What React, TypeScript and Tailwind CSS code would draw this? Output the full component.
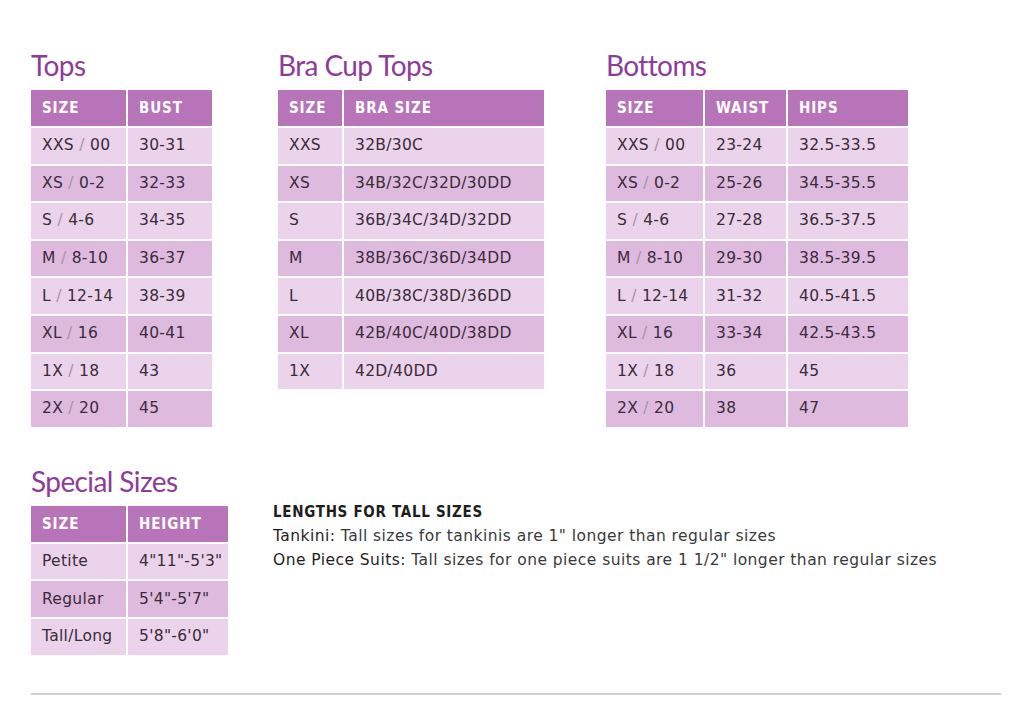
import React from "react";

const titleFont = { fontFamily: "Lato, 'Open Sans', sans-serif" };
const condFont = { fontFamily: "'DejaVu Sans Condensed', 'DejaVu Sans', sans-serif" };
const bodyFont = { fontFamily: "'DejaVu Sans', sans-serif" };

type Cell = string;

function SizeCell({ text }: { text: string }) {
  const parts = text.split(" / ");
  if (parts.length === 2) {
    return (
      <span>
        {parts[0]} <span className="text-[#a892a8]">/</span> {parts[1]}
      </span>
    );
  }
  return <span>{text}</span>;
}

function Table({
  cols,
  headers,
  rows,
}: {
  cols: string;
  headers: string[];
  rows: Cell[][];
}) {
  return (
    <div className={`grid ${cols} gap-[2px]`}>
      {headers.map((h, i) => (
        <div
          key={"h" + i}
          className="h-[36px] bg-[#b874b8] text-white font-bold text-[15px] tracking-[0.9px] flex items-center pl-[11px]"
          style={condFont}
        >
          {h}
        </div>
      ))}
      {rows.map((r, ri) =>
        r.map((c, ci) => (
          <div
            key={ri + "-" + ci}
            className={`h-[35.6px] flex items-center pl-[11px] text-[15.5px] tracking-[0.3px] text-[#3a2c3a] ${
              ri % 2 === 0 ? "bg-[#ebd3eb]" : "bg-[#dfbadf]"
            }`}
            style={bodyFont}
          >
            {ci === 0 ? <SizeCell text={c} /> : c}
          </div>
        ))
      )}
    </div>
  );
}

function Title({ children }: { children: React.ReactNode }) {
  return (
    <div
      className="text-[28px] leading-[34px] text-[#8d3c98] tracking-[-0.6px] mb-[8px]"
      style={titleFont}
    >
      {children}
    </div>
  );
}

export default function App() {
  return (
    <div className="w-[1032px] h-[708px] bg-white overflow-hidden" style={bodyFont}>
      <div className="pl-[31px] pt-[48px]">
        <div className="flex items-start">
          <div className="w-[181px]">
            <Title>Tops</Title>
            <Table
              cols="grid-cols-[95px_84px]"
              headers={["SIZE", "BUST"]}
              rows={[
                ["XXS / 00", "30-31"],
                ["XS / 0-2", "32-33"],
                ["S / 4-6", "34-35"],
                ["M / 8-10", "36-37"],
                ["L / 12-14", "38-39"],
                ["XL / 16", "40-41"],
                ["1X / 18", "43"],
                ["2X / 20", "45"],
              ]}
            />
          </div>
          <div className="w-[266px] ml-[66px]">
            <Title>Bra Cup Tops</Title>
            <Table
              cols="grid-cols-[64px_200px]"
              headers={["SIZE", "BRA SIZE"]}
              rows={[
                ["XXS", "32B/30C"],
                ["XS", "34B/32C/32D/30DD"],
                ["S", "36B/34C/34D/32DD"],
                ["M", "38B/36C/36D/34DD"],
                ["L", "40B/38C/38D/36DD"],
                ["XL", "42B/40C/40D/38DD"],
                ["1X", "42D/40DD"],
              ]}
            />
          </div>
          <div className="w-[302px] ml-[62px]">
            <Title>Bottoms</Title>
            <Table
              cols="grid-cols-[97px_81px_120px]"
              headers={["SIZE", "WAIST", "HIPS"]}
              rows={[
                ["XXS / 00", "23-24", "32.5-33.5"],
                ["XS / 0-2", "25-26", "34.5-35.5"],
                ["S / 4-6", "27-28", "36.5-37.5"],
                ["M / 8-10", "29-30", "38.5-39.5"],
                ["L / 12-14", "31-32", "40.5-41.5"],
                ["XL / 16", "33-34", "42.5-43.5"],
                ["1X / 18", "36", "45"],
                ["2X / 20", "38", "47"],
              ]}
            />
          </div>
        </div>

        <div className="flex items-start mt-[37px]">
          <div className="w-[197px]">
            <Title>Special Sizes</Title>
            <Table
              cols="grid-cols-[95px_100px]"
              headers={["SIZE", "HEIGHT"]}
              rows={[
                ["Petite", "4\"11\"-5'3\""],
                ["Regular", "5'4\"-5'7\""],
                ["Tall/Long", "5'8\"-6'0\""],
              ]}
            />
          </div>
          <div className="ml-[45px] mt-[36px] text-[15.5px] tracking-[0.45px] leading-[24px] text-[#3a3a3a]">
            <div className="font-bold text-[15px] text-[#1e1e1e] tracking-[0.7px]" style={condFont}>
              LENGTHS FOR TALL SIZES
            </div>
            <div>
              <span className="text-[#1e1e1e]">Tankini:</span> Tall sizes for tankinis are 1" longer than regular sizes
            </div>
            <div>
              <span className="text-[#1e1e1e]">One Piece Suits:</span> Tall sizes for one piece suits are 1 1/2" longer than regular sizes
            </div>
          </div>
        </div>
      </div>
      <div className="mx-[31px] w-[970px] mt-[38px] h-[2px] bg-[#cfcfcf]" />
    </div>
  );
}
